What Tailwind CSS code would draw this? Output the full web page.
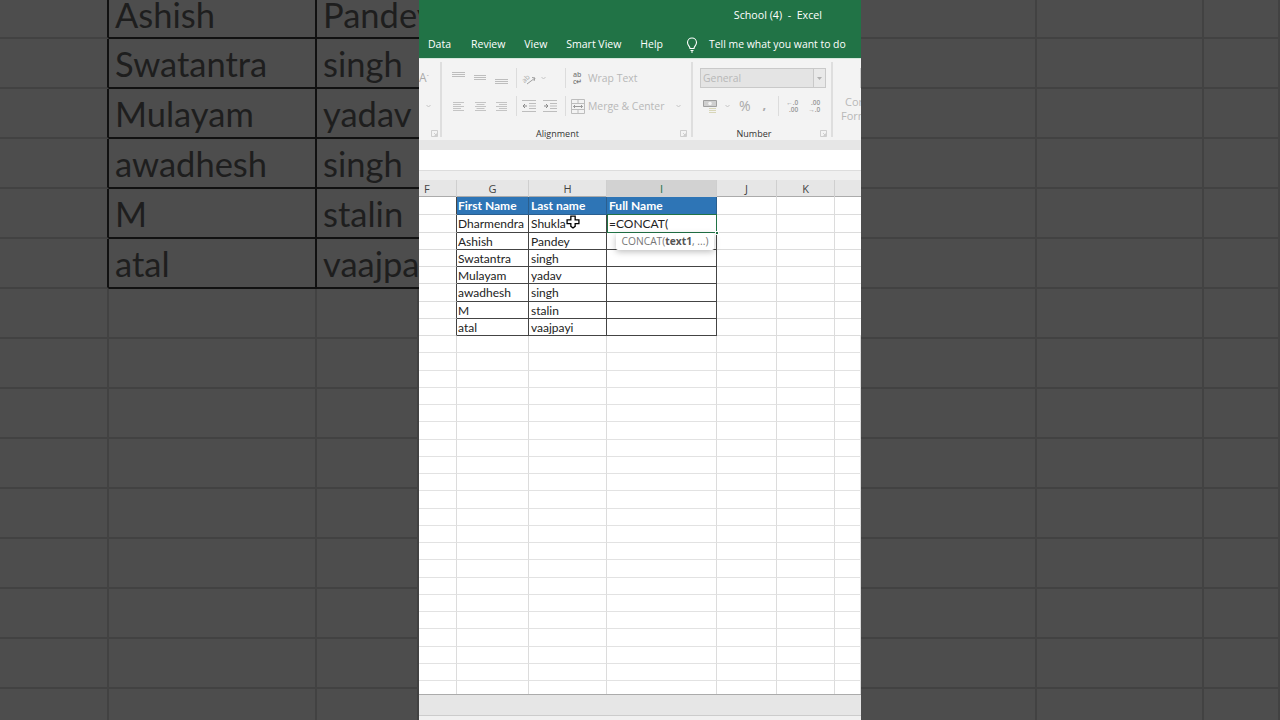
<!DOCTYPE html>
<html lang="en">
<head>
    <meta charset="UTF-8">
    <title>School (4) - Excel</title>
    <script src="https://cdn.jsdelivr.net/npm/@tailwindcss/browser@4"></script>
</head>
<body class="w-[1280px] h-[720px] overflow-hidden bg-[#4d4d4d]">
<div class="flex w-[1280px] h-[720px] overflow-hidden">

    <!-- dimmed zoomed sheet, left side -->
    <div id="leftBg" class="w-[419px] h-[720px] overflow-hidden grid grid-cols-[109px_208px_102px] grid-rows-[39px] auto-rows-[50px] bg-[#4d4d4d] font-['Lato',sans-serif] text-[34.5px] text-[#1e1e1e] whitespace-nowrap">
        <div class="border-r-2 border-b-2 border-r-[#111] border-b-[#424242]"></div>
        <div class="border-r-2 border-b-2 border-[#111] pl-[6px] leading-[30px]">Ashish</div>
        <div class="border-b-2 border-[#111] pl-[6px] leading-[30px] overflow-hidden">Pandey</div>
        <div class="border-r-2 border-b-2 border-r-[#111] border-b-[#424242]"></div>
        <div class="border-r-2 border-b-2 border-[#111] pl-[6px] leading-[50px]">Swatantra</div>
        <div class="border-b-2 border-[#111] pl-[6px] leading-[50px] overflow-hidden">singh</div>
        <div class="border-r-2 border-b-2 border-r-[#111] border-b-[#424242]"></div>
        <div class="border-r-2 border-b-2 border-[#111] pl-[6px] leading-[50px]">Mulayam</div>
        <div class="border-b-2 border-[#111] pl-[6px] leading-[50px] overflow-hidden">yadav</div>
        <div class="border-r-2 border-b-2 border-r-[#111] border-b-[#424242]"></div>
        <div class="border-r-2 border-b-2 border-[#111] pl-[6px] leading-[50px]">awadhesh</div>
        <div class="border-b-2 border-[#111] pl-[6px] leading-[50px] overflow-hidden">singh</div>
        <div class="border-r-2 border-b-2 border-r-[#111] border-b-[#424242]"></div>
        <div class="border-r-2 border-b-2 border-[#111] pl-[6px] leading-[50px]">M</div>
        <div class="border-b-2 border-[#111] pl-[6px] leading-[50px] overflow-hidden">stalin</div>
        <div class="border-r-2 border-b-2 border-r-[#111] border-b-[#424242]"></div>
        <div class="border-r-2 border-b-2 border-[#111] pl-[6px] leading-[50px]">atal</div>
        <div class="border-b-2 border-[#111] pl-[6px] leading-[50px] overflow-hidden">vaajpayi</div>
    </div>

    <!-- the excel window -->
    <div class="w-[442px] h-[720px] flex flex-col overflow-hidden bg-white font-['Open_Sans',sans-serif]">

        <div class="h-[59px] bg-[#217346] border-b border-[#d5e8dc] text-white text-[10.5px]">
            <div class="h-[31px] flex items-center justify-end pr-[39px] text-[10.7px]">School (4)&nbsp; -&nbsp; Excel</div>
            <div class="h-[27px] flex items-center pl-[9px] gap-[19px]">
                <span>Data</span>
                <span class="ml-px">Review</span>
                <span>View</span>
                <span>Smart View</span>
                <span>Help</span>
                <svg class="w-[14px] h-[16px] ml-[3px]" viewBox="0 0 14 16" fill="none" stroke="#fff" stroke-width="1.1"><path d="M5 11.5C5 9 2.5 8.5 2.5 5.5a4.5 4.5 0 0 1 9 0C11.5 8.5 9 9 9 11.5Z"/><path d="M5.5 13.5h3M6 15h2"/></svg>
                <span class="-ml-[9px] text-[10.4px]">Tell me what you want to do</span>
            </div>
        </div>

        <!-- ribbon -->
        <div class="h-[81px] bg-[#f3f3f3] flex text-[#b8b8b8] text-[10.4px] overflow-hidden">
            <div class="relative w-[23px] border-r-2 border-[#dedede] shrink-0 my-[3px]">
                <span class="absolute left-0 top-[7px] text-[12px] text-[#aaa]">A<sup class="text-[6px]">ˆ</sup></span>
                <svg class="absolute left-[7px] top-[42px] w-[5px] h-[4px]" viewBox="0 0 5 4" fill="none" stroke="#c4c4c4"><path d="M.5 1l2 2 2-2"/></svg>
                <svg class="absolute left-[12px] top-[68px] w-[7px] h-[7px]" viewBox="0 0 7 7" fill="none" stroke="#c4c4c4" stroke-width=".8"><path d="M.5 6.5v-6h6v6zM3 3l2.5 2.5M3.500 5.5h2v-2"/></svg>
            </div>

            <div class="relative w-[251px] shrink-0 border-r-2 border-[#dedede] my-[3px] flex flex-col">
                <div class="h-[20px] mt-[6px] flex items-center">
                    <svg class="ml-[10px] w-[13px] h-[14px]" viewBox="0 0 13 14" stroke="#bdbdbd"><path d="M0 1.5h13M0 3.5h13M0 5.5h13"/></svg>
                    <svg class="ml-[9px] w-[12px] h-[14px]" viewBox="0 0 12 14" stroke="#bdbdbd"><path d="M0 4.5h12M0 6.5h12M0 8.5h12"/></svg>
                    <svg class="ml-[9px] w-[13px] h-[14px]" viewBox="0 0 13 14" stroke="#bdbdbd"><path d="M0 8.5h13M0 10.5h13M0 12.5h13"/></svg>
                    <div class="ml-[8px] w-px h-[20px] bg-[#dcdcdc]"></div>
                    <svg class="ml-[5px] w-[14px] h-[13px]" viewBox="0 0 14 13" fill="none" stroke="#b4b4b4"><text x="0" y="9" font-size="7" fill="#a8a8a8" stroke="none" transform="rotate(-45 4 7)" font-family="Open Sans">ab</text><path d="M5 12l8-6M13 6l-3-.5M13 6l-1 3" stroke="#a0a0a0"/></svg>
                    <svg class="ml-[5px] w-[5px] h-[4px]" viewBox="0 0 5 4" fill="none" stroke="#c4c4c4"><path d="M.5 1l2 2 2-2"/></svg>
                    <div class="ml-[19px] w-px h-[20px] bg-[#dcdcdc]"></div>
                    <div class="ml-[7px] w-[12px] text-[7px] leading-[7.5px] font-semibold text-[#808080]">ab<br>c↵</div>
                    <span class="ml-[3px] leading-[20px]">Wrap Text</span>
                </div>
                <div class="h-[20px] mt-[8px] flex items-center">
                    <svg class="ml-[11px] w-[11px] h-[9px]" viewBox="0 0 11 9" stroke="#c4c4c4"><path d="M0 .5h11M0 2.5h8M0 4.5h11M0 6.5h8M0 8.5h11"/></svg>
                    <svg class="ml-[11px] w-[11px] h-[9px]" viewBox="0 0 11 9" stroke="#c4c4c4"><path d="M0 .5h11M1.5 2.5h8M0 4.5h11M1.5 6.5h8M0 8.5h11"/></svg>
                    <svg class="ml-[10px] w-[11px] h-[9px]" viewBox="0 0 11 9" stroke="#c4c4c4"><path d="M0 .5h11M3 2.5h8M0 4.5h11M3 6.5h8M0 8.5h11"/></svg>
                    <div class="ml-[9px] w-px h-[20px] bg-[#dcdcdc]"></div>
                    <svg class="ml-[5px] w-[14px] h-[12px]" viewBox="0 0 14 12" fill="none" stroke="#bdbdbd"><path d="M0 .5h14M7 3.5h7M7 6h7M7 8.5h7M0 11.5h14"/><path d="M5 6H1M3 4L1 6l2 2" stroke="#8a8a8a"/></svg>
                    <svg class="ml-[7px] w-[14px] h-[12px]" viewBox="0 0 14 12" fill="none" stroke="#bdbdbd"><path d="M0 .5h14M7 3.5h7M7 6h7M7 8.5h7M0 11.5h14"/><path d="M1 6h4M3 4l2 2-2 2" stroke="#8a8a8a"/></svg>
                    <div class="ml-[8px] w-px h-[20px] bg-[#dcdcdc]"></div>
                    <svg class="ml-[5px] w-[14px] h-[15px]" viewBox="0 0 14 15" fill="none" stroke="#bdbdbd"><path d="M.5.5h13v14H.5zM.5 4.5h13M.5 10.5h13M7 .5v4M7 10.5v4"/><path d="M2.5 7.5h9M4 6L2.5 7.5 4 9M10 6l1.5 1.5L10 9" stroke="#9a9a9a"/></svg>
                    <span class="ml-[3px] leading-[20px]">Merge &amp; Center</span>
                    <svg class="ml-[12px] w-[5px] h-[4px]" viewBox="0 0 5 4" fill="none" stroke="#c4c4c4"><path d="M.5 1l2 2 2-2"/></svg>
                </div>
                <div class="mt-[11px] pr-[18px] text-center text-[9px] leading-[14px] text-[#333]">Alignment</div>
                <svg class="absolute right-[4px] top-[68px] w-[7px] h-[7px]" viewBox="0 0 7 7" fill="none" stroke="#c4c4c4" stroke-width=".8"><path d="M.5 6.5v-6h6v6zM3 3l2.5 2.5M3.5 5.5h2v-2"/></svg>
            </div>

            <div class="relative w-[140px] shrink-0 border-r-2 border-[#dedede] my-[3px] flex flex-col">
                <div class="h-[20px] mt-[6px] ml-[7px] w-[126px] flex bg-[#e4e4e4] border border-[#c9c9c9] items-center pl-[2px] leading-[18px]">
                    <span class="grow">General</span>
                    <div class="w-[12px] h-[18px] border-l border-[#c9c9c9] bg-[#e9e9e9] flex items-center justify-center">
                        <svg class="w-[5px] h-[3px]" viewBox="0 0 5 3" fill="#b0b0b0"><path d="M0 0h5L2.5 3z"/></svg>
                    </div>
                </div>
                <div class="h-[20px] mt-[8px] flex items-center">
                    <svg class="ml-[10px] w-[14px] h-[13px]" viewBox="0 0 14 13" fill="none"><path d="M.5.5h13v6H.5z" stroke="#a0a0a0" fill="#cfcfcf"/><circle cx="7" cy="3.5" r="1.8" fill="#f3f3f3"/><path d="M6 8.5h7M6 10.5h7M6 12.5h7" stroke="#d8d6b8" stroke-width="1.2"/></svg>
                    <svg class="ml-[8px] w-[5px] h-[4px]" viewBox="0 0 5 4" fill="none" stroke="#c4c4c4"><path d="M.5 1l2 2 2-2"/></svg>
                    <span class="ml-[9px] text-[14px] leading-[20px] text-[#aaa]">%</span>
                    <span class="ml-[12px] text-[13px] leading-[14px] font-bold text-[#aaa] -translate-y-[2px]">,</span>
                    <div class="ml-[12px] w-px h-[20px] bg-[#dcdcdc]"></div>
                    <div class="ml-[7px] w-[12px] text-[6.5px] leading-[7px] text-right text-[#999] font-semibold">←.0<br>.00</div>
                    <div class="ml-[10px] w-[12px] text-[6.5px] leading-[7px] text-right text-[#999] font-semibold">.00<br>→.0</div>
                </div>
                <div class="mt-[11px] pr-[16px] text-center text-[9px] leading-[14px] text-[#333]">Number</div>
                <svg class="absolute right-[4px] top-[68px] w-[7px] h-[7px]" viewBox="0 0 7 7" fill="none" stroke="#c4c4c4" stroke-width=".8"><path d="M.5 6.5v-6h6v6zM3 3l2.5 2.5M3.5 5.5h2v-2"/></svg>
            </div>

            <div class="relative grow overflow-hidden whitespace-nowrap leading-[14px] text-[11px] pt-[36px]">
                <div class="pl-[12px]">Cor</div>
                <div class="pl-[8px]">Form</div>
                <div class="absolute right-0 top-[9px] w-px h-[20px] bg-[#cccccc]"></div>
            </div>
        </div>

        <!-- formula bar -->
        <div class="h-[10px] bg-[#e6e6e6]"></div>
        <div class="h-[21px] bg-white border-b border-[#dddddd]"></div>
        <div class="h-[9px] bg-[#f0f0f0]"></div>

        <!-- column letters -->
        <div class="h-[17px] grid grid-cols-[38px_72px_78px_110px_60px_58px_26px] bg-[#e6e6e6] border-b border-[#ababab] text-[11px] leading-[17px] text-[#444] text-center">
            <div class="border-r border-[#cfcfcf] text-left pl-[5px]">F</div>
            <div class="border-r border-[#cfcfcf]">G</div>
            <div class="border-r border-[#cfcfcf]">H</div>
            <div class="border-r border-[#cfcfcf] bg-[#d2d2d2] text-[#217346] border-b border-b-[#217346]">I</div>
            <div class="border-r border-[#cfcfcf]">J</div>
            <div class="border-r border-[#cfcfcf]">K</div>
            <div></div>
        </div>

        <!-- sheet -->
        <div class="relative h-[497px] overflow-hidden">
            <div id="sheet" class="grid grid-cols-[38px_72px_78px_110px_60px_58px_26px] grid-rows-[18.25px] auto-rows-[17.25px] font-['Lato',sans-serif] text-[12px] leading-[17px] text-[#222] whitespace-nowrap">
                <div class="border-r border-b border-r-[#444] border-b-[#dcdcdc]"></div>
                <div class="border-r border-b border-[#2a5f8f] bg-[#2e75b6] text-white font-bold pl-[1px] leading-[18px]">First Name</div>
                <div class="border-r border-b border-[#2a5f8f] bg-[#2e75b6] text-white font-bold pl-[2px] leading-[18px]">Last name</div>
                <div class="border-r border-b border-[#2a5f8f] bg-[#2e75b6] text-white font-bold pl-[2px] leading-[18px]">Full Name</div>
                <div class="border-r border-b border-[#dcdcdc]"></div>
                <div class="border-r border-b border-[#dcdcdc]"></div>
                <div class="border-b border-[#dcdcdc]"></div>

                <div class="border-r border-b border-r-[#444] border-b-[#dcdcdc]"></div>
                <div class="border-r border-b border-[#444] pl-[1px]">Dharmendra</div>
                <div class="border-r border-b border-[#444] pl-[2px]">Shukla</div>
                <div class="border-r border-b border-[#444] pl-[2px]">=CONCAT(</div>
                <div class="border-r border-b border-[#dcdcdc]"></div>
                <div class="border-r border-b border-[#dcdcdc]"></div>
                <div class="border-b border-[#dcdcdc]"></div>

                <div class="border-r border-b border-r-[#444] border-b-[#dcdcdc]"></div>
                <div class="border-r border-b border-[#444] pl-[1px]">Ashish</div>
                <div class="border-r border-b border-[#444] pl-[2px]">Pandey</div>
                <div class="border-r border-b border-[#444]"></div>
                <div class="border-r border-b border-[#dcdcdc]"></div>
                <div class="border-r border-b border-[#dcdcdc]"></div>
                <div class="border-b border-[#dcdcdc]"></div>

                <div class="border-r border-b border-r-[#444] border-b-[#dcdcdc]"></div>
                <div class="border-r border-b border-[#444] pl-[1px]">Swatantra</div>
                <div class="border-r border-b border-[#444] pl-[2px]">singh</div>
                <div class="border-r border-b border-[#444]"></div>
                <div class="border-r border-b border-[#dcdcdc]"></div>
                <div class="border-r border-b border-[#dcdcdc]"></div>
                <div class="border-b border-[#dcdcdc]"></div>

                <div class="border-r border-b border-r-[#444] border-b-[#dcdcdc]"></div>
                <div class="border-r border-b border-[#444] pl-[1px]">Mulayam</div>
                <div class="border-r border-b border-[#444] pl-[2px]">yadav</div>
                <div class="border-r border-b border-[#444]"></div>
                <div class="border-r border-b border-[#dcdcdc]"></div>
                <div class="border-r border-b border-[#dcdcdc]"></div>
                <div class="border-b border-[#dcdcdc]"></div>

                <div class="border-r border-b border-r-[#444] border-b-[#dcdcdc]"></div>
                <div class="border-r border-b border-[#444] pl-[1px]">awadhesh</div>
                <div class="border-r border-b border-[#444] pl-[2px]">singh</div>
                <div class="border-r border-b border-[#444]"></div>
                <div class="border-r border-b border-[#dcdcdc]"></div>
                <div class="border-r border-b border-[#dcdcdc]"></div>
                <div class="border-b border-[#dcdcdc]"></div>

                <div class="border-r border-b border-r-[#444] border-b-[#dcdcdc]"></div>
                <div class="border-r border-b border-[#444] pl-[1px]">M</div>
                <div class="border-r border-b border-[#444] pl-[2px]">stalin</div>
                <div class="border-r border-b border-[#444]"></div>
                <div class="border-r border-b border-[#dcdcdc]"></div>
                <div class="border-r border-b border-[#dcdcdc]"></div>
                <div class="border-b border-[#dcdcdc]"></div>

                <div class="border-r border-b border-r-[#444] border-b-[#dcdcdc]"></div>
                <div class="border-r border-b border-[#444] pl-[1px]">atal</div>
                <div class="border-r border-b border-[#444] pl-[2px]">vaajpayi</div>
                <div class="border-r border-b border-[#444]"></div>
                <div class="border-r border-b border-[#dcdcdc]"></div>
                <div class="border-r border-b border-[#dcdcdc]"></div>
                <div class="border-b border-[#dcdcdc]"></div>
            </div>

            <!-- active cell, handle, formula hint, cursor -->
            <div class="absolute left-[188px] top-[17px] w-[110px] h-[19px] border-[1.5px] border-[#217346]">
                <div class="absolute -right-[3px] -bottom-[3px] w-[4px] h-[4px] bg-[#217346] border border-white"></div>
            </div>
            <div class="absolute left-[197px] top-[36px] w-[98px] h-[17px] bg-white rounded-[2px] shadow-[0_2px_6px_rgba(0,0,0,0.25)] text-[10.25px] leading-[17px] text-center text-[#777] whitespace-nowrap">CONCAT(<b class="text-[#555]">text1</b>, ...)</div>
            <svg class="absolute left-[147px] top-[18px] w-[14px] h-[14px]" viewBox="0 0 13 13" fill="#fff" stroke="#000" stroke-width="1.2"><path d="M4.5 1h4v3.5H12V8H8.5v2.500L6.5 12l-2-1.500V8H1V4.500h3.500z"/></svg>
        </div>

        <!-- sheet tabs strip -->
        <div class="h-[22px] bg-[#e6e6e6] border-t border-b border-t-[#ababab] border-b-[#cccccc]"></div>
        <div class="grow bg-[#f0f0f0]"></div>
    </div>

    <!-- dimmed zoomed sheet, right side -->
    <div id="rightBg" class="w-[419px] h-[720px] overflow-hidden grid grid-cols-[176px_167px_76px] grid-rows-[39px] auto-rows-[50px] bg-[#4d4d4d]"></div>
</div>

<script>
    // empty cells only: the grid lines carry on past the data
    function fill(id, count, cls) {
        const box = document.getElementById(id);
        for (let i = 0; i < count; i++) {
            const cell = document.createElement('div');
            cell.className = cls;
            box.appendChild(cell);
        }
    }
    fill('leftBg', 27, 'border-r-2 border-b-2 border-[#424242]');
    fill('rightBg', 45, 'border-r-2 border-b-2 border-[#424242]');
    fill('sheet', 147, 'border-r border-b border-r-[#dcdcdc] border-b-[#e2e2e2]');
</script>
</body>
</html>
